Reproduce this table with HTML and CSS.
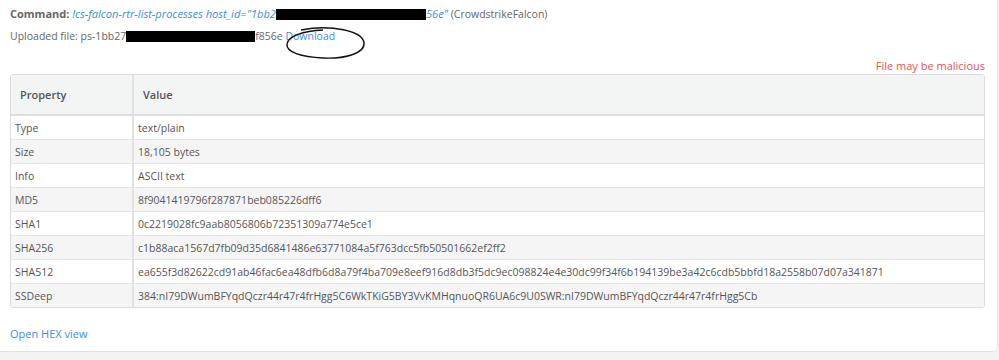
FILE: index.html
```html
<!DOCTYPE html>
<html lang="en">
<head>
<meta charset="utf-8">
<title>File entry</title>
<link rel="stylesheet" href="styles.css">
</head>
<body>
<div class="panel">
  <div class="meta">
    <div class="line"><span class="label">Command:</span> <a class="cmd" href="#">!cs-falcon-rtr-list-processes host_id="1bb2<span class="redact r1"></span>56e"</a> (CrowdstrikeFalcon)</div>
    <div class="line">Uploaded file: ps-1bb27<span class="redact r2"></span>f856e <a class="link" href="#">Download</a></div>
  </div>
  <svg class="circle" width="90" height="40" viewBox="0 0 90 40" aria-hidden="true">
    <path d="M18 6 C48 0, 80 7, 81 19 C82 30, 60 35, 40 34 C18 33, 3 28, 4 20 C5 12, 20 7, 40 6" fill="none" stroke="#111" stroke-width="1.4"/>
  </svg>
  <div class="warn">File may be malicious</div>
  <table class="props">
    <colgroup><col class="k"><col></colgroup>
    <thead>
      <tr><th class="c1">Property</th><th>Value</th></tr>
    </thead>
    <tbody>
      <tr><td class="c1">Type</td><td>text/plain</td></tr>
      <tr><td class="c1">Size</td><td>18,105 bytes</td></tr>
      <tr><td class="c1">Info</td><td>ASCII text</td></tr>
      <tr><td class="c1">MD5</td><td>8f9041419796f287871beb085226dff6</td></tr>
      <tr><td class="c1">SHA1</td><td>0c2219028fc9aab8056806b72351309a774e5ce1</td></tr>
      <tr><td class="c1">SHA256</td><td>c1b88aca1567d7fb09d35d6841486e63771084a5f763dcc5fb50501662ef2ff2</td></tr>
      <tr><td class="c1">SHA512</td><td>ea655f3d82622cd91ab46fac6ea48dfb6d8a79f4ba709e8eef916d8db3f5dc9ec098824e4e30dc99f34f6b194139be3a42c6cdb5bbfd18a2558b07d07a341871</td></tr>
      <tr><td class="c1">SSDeep</td><td>384:nI79DWumBFYqdQczr44r47r4frHgg5C6WkTKiG5BY3VvKMHqnuoQR6UA6c9U0SWR:nI79DWumBFYqdQczr44r47r4frHgg5Cb</td></tr>
    </tbody>
  </table>
  <a class="link hex" href="#">Open HEX view</a>
</div>
</body>
</html>
```

FILE: styles.css
```css
html, body {
  margin: 0;
  padding: 0;
}
body {
  background: #f3f3f3;
  font-family: "Open Sans", "Liberation Sans", sans-serif;
  font-size: 10.5px;
  color: #666;
}
.panel {
  position: relative;
  box-sizing: border-box;
  height: 352px;
  margin-right: 1px;
  padding: 3px 12px 0 10px;
  background: #fff;
  border-right: 1px solid #e8e8e8;
  border-bottom: 1px solid #e2e2e2;
  border-bottom-right-radius: 5px;
}
.line {
  line-height: 22px;
  white-space: nowrap;
}
.label {
  font-weight: 700;
  font-size: 11px;
  color: #666;
}
.cmd {
  color: #3b8fdc;
  font-style: italic;
  font-size: 11.1px;
  text-decoration: none;
}
.link {
  color: #3b8fdc;
  text-decoration: none;
}
.redact {
  display: inline-block;
  background: #000;
  height: 11px;
  vertical-align: -2px;
}
.r1 { width: 150px; }
.r2 { width: 129px; }
.circle {
  position: absolute;
  left: 283px;
  top: 24px;
}
.warn {
  margin-top: 11px;
  text-align: right;
  line-height: 16px;
  color: #e0575a;
  font-size: 11px;
}
.props {
  width: 100%;
  table-layout: fixed;
  border-collapse: separate;
  border-spacing: 0;
  border: 1px solid #dcdcdc;
  border-radius: 3px;
  color: #555;
}
.props col.k {
  width: 123px;
}
.props th {
  height: 39px;
  padding: 0 9px;
  text-align: left;
  font-weight: 600;
  font-size: 11px;
  background: #f3f4f4;
  border-bottom: 2px solid #dedede;
}
.props td {
  height: 23px;
  padding: 0 4px;
  font-size: 10.5px;
  border-top: 1px solid #e6e6e6;
  white-space: nowrap;
  overflow: hidden;
}
.props tbody tr:first-child td {
  border-top: 0;
}
.props .c1 {
  border-right: 2px solid #e2e2e2;
}
.props tbody tr:nth-child(even) td {
  background: #f5f5f5;
}
.hex {
  display: inline-block;
  margin-top: 18px;
  line-height: 16px;
  font-size: 11px;
}
```
